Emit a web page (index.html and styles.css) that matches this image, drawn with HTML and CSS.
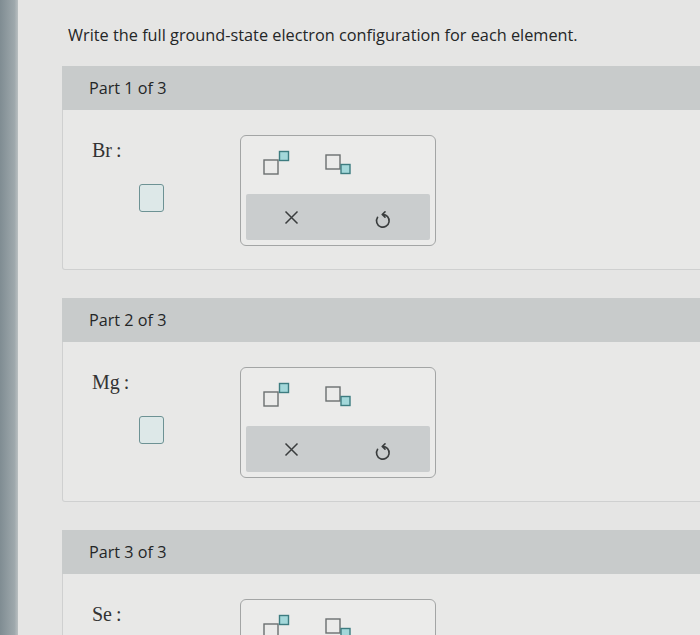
FILE: index.html
```html
<!DOCTYPE html>
<html>
<head>
<meta charset="utf-8">
<link rel="stylesheet" href="styles.css">
</head>
<body>
<div class="page">
  <div class="sidebar"></div>
  <div class="content">
    <p class="title">Write the full ground-state electron configuration for each element.</p>

    <section class="part">
      <div class="part-head">Part 1 of 3</div>
      <div class="part-body">
        <div class="answer">
          <div class="label">Br<span class="colon">:</span></div>
          <div class="input-box"></div>
        </div>
        <div class="panel">
          <div class="panel-top">
            <svg class="ico" width="28" height="25" viewBox="0 0 28 25"><rect x="1" y="10" width="14" height="14" fill="none" stroke="#6b6f70" stroke-width="1.4"/><rect x="16.5" y="1.5" width="9" height="9" fill="#a3d8da" stroke="#3d7c80" stroke-width="1.4"/></svg>
            <svg class="ico" width="28" height="25" viewBox="0 0 28 25"><rect x="1" y="5" width="14" height="14" fill="none" stroke="#6b6f70" stroke-width="1.4"/><rect x="16" y="14.5" width="9" height="9" fill="#a3d8da" stroke="#3d7c80" stroke-width="1.4"/></svg>
          </div>
          <div class="panel-strip">
            <svg class="x-ico" width="15" height="15" viewBox="0 0 15 15"><path d="M1.5 1.5 L13.5 13.5 M13.5 1.5 L1.5 13.5" stroke="#3a3d3e" stroke-width="1.5" fill="none"/></svg>
            <svg class="undo-ico" width="18" height="20" viewBox="0 0 18 20"><path d="M8.6 5.5 A6.3 6.3 0 1 1 3.6 8.3 M11 2.8 L8.2 5.5 L11 8.2" stroke="#3a3d3e" stroke-width="1.6" fill="none" stroke-linecap="round" stroke-linejoin="round"/></svg>
          </div>
        </div>
      </div>
    </section>

    <section class="part">
      <div class="part-head">Part 2 of 3</div>
      <div class="part-body">
        <div class="answer">
          <div class="label">Mg<span class="colon">:</span></div>
          <div class="input-box"></div>
        </div>
        <div class="panel">
          <div class="panel-top">
            <svg class="ico" width="28" height="25" viewBox="0 0 28 25"><rect x="1" y="10" width="14" height="14" fill="none" stroke="#6b6f70" stroke-width="1.4"/><rect x="16.5" y="1.5" width="9" height="9" fill="#a3d8da" stroke="#3d7c80" stroke-width="1.4"/></svg>
            <svg class="ico" width="28" height="25" viewBox="0 0 28 25"><rect x="1" y="5" width="14" height="14" fill="none" stroke="#6b6f70" stroke-width="1.4"/><rect x="16" y="14.5" width="9" height="9" fill="#a3d8da" stroke="#3d7c80" stroke-width="1.4"/></svg>
          </div>
          <div class="panel-strip">
            <svg class="x-ico" width="15" height="15" viewBox="0 0 15 15"><path d="M1.5 1.5 L13.5 13.5 M13.5 1.5 L1.5 13.5" stroke="#3a3d3e" stroke-width="1.5" fill="none"/></svg>
            <svg class="undo-ico" width="18" height="20" viewBox="0 0 18 20"><path d="M8.6 5.5 A6.3 6.3 0 1 1 3.6 8.3 M11 2.8 L8.2 5.5 L11 8.2" stroke="#3a3d3e" stroke-width="1.6" fill="none" stroke-linecap="round" stroke-linejoin="round"/></svg>
          </div>
        </div>
      </div>
    </section>

    <section class="part">
      <div class="part-head">Part 3 of 3</div>
      <div class="part-body">
        <div class="answer">
          <div class="label">Se<span class="colon">:</span></div>
          <div class="input-box"></div>
        </div>
        <div class="panel">
          <div class="panel-top">
            <svg class="ico" width="28" height="25" viewBox="0 0 28 25"><rect x="1" y="10" width="14" height="14" fill="none" stroke="#6b6f70" stroke-width="1.4"/><rect x="16.5" y="1.5" width="9" height="9" fill="#a3d8da" stroke="#3d7c80" stroke-width="1.4"/></svg>
            <svg class="ico" width="28" height="25" viewBox="0 0 28 25"><rect x="1" y="5" width="14" height="14" fill="none" stroke="#6b6f70" stroke-width="1.4"/><rect x="16" y="14.5" width="9" height="9" fill="#a3d8da" stroke="#3d7c80" stroke-width="1.4"/></svg>
          </div>
          <div class="panel-strip">
            <svg class="x-ico" width="15" height="15" viewBox="0 0 15 15"><path d="M1.5 1.5 L13.5 13.5 M13.5 1.5 L1.5 13.5" stroke="#3a3d3e" stroke-width="1.5" fill="none"/></svg>
            <svg class="undo-ico" width="18" height="20" viewBox="0 0 18 20"><path d="M8.6 5.5 A6.3 6.3 0 1 1 3.6 8.3 M11 2.8 L8.2 5.5 L11 8.2" stroke="#3a3d3e" stroke-width="1.6" fill="none" stroke-linecap="round" stroke-linejoin="round"/></svg>
          </div>
        </div>
      </div>
    </section>
  </div>
</div>
</body>
</html>
```

FILE: styles.css
```css
html, body {
  margin: 0;
  padding: 0;
  background: #e5e5e4;
  overflow: hidden;
}

.page {
  display: flex;
  min-height: 635px;
}

.sidebar {
  width: 18px;
  flex: none;
  background: linear-gradient(to right, #7f8c92, #9ea8ac 80%, #b9bfc1);
}

.content {
  flex: 1;
  padding: 25px 0 0 44px;
  font-family: "Open Sans", "Noto Sans", sans-serif;
  color: #242627;
  overflow: hidden;
}

.title {
  margin: 0 0 21px 6px;
  font-size: 16.3px;
  line-height: 20px;
  white-space: nowrap;
}

.part {
  margin-right: -12px;
  margin-bottom: 28px;
}

.part-head {
  height: 44px;
  display: flex;
  align-items: center;
  padding-left: 27px;
  background: #c8cbcb;
  font-size: 16.2px;
}

.part-body {
  height: 160px;
  box-sizing: border-box;
  border: 1px solid #cfd0d0;
  border-top: none;
  border-radius: 0 0 3px 3px;
  background: #e8e8e7;
  display: flex;
  padding: 25px 0 0 29px;
}

.answer {
  width: 148px;
  flex: none;
}

.label {
  margin-top: 4px;
  font-family: "Liberation Serif", serif;
  font-size: 20px;
  line-height: 22px;
  color: #333;
}

.colon {
  margin-left: 4px;
}

.input-box {
  margin: 23px 0 0 47px;
  width: 25px;
  height: 28px;
  box-sizing: border-box;
  border: 1.5px solid #6d9294;
  border-radius: 3px;
  background: #dde8e8;
}

.panel {
  width: 196px;
  height: 111px;
  box-sizing: border-box;
  border: 1px solid #a3a5a5;
  border-radius: 6px;
  background: #ebebea;
  display: flex;
  flex-direction: column;
}

.panel-top {
  height: 58px;
  box-sizing: border-box;
  padding: 14px 0 0 22px;
  display: flex;
  align-items: flex-start;
  gap: 34px;
}

.panel-strip {
  margin: 0 5px 5px;
  height: 46px;
  background: #cacdce;
  border-radius: 2px;
  display: flex;
  align-items: center;
  padding-left: 38px;
  gap: 75px;
}

.undo-ico {
  margin-top: 3px;
}
```
